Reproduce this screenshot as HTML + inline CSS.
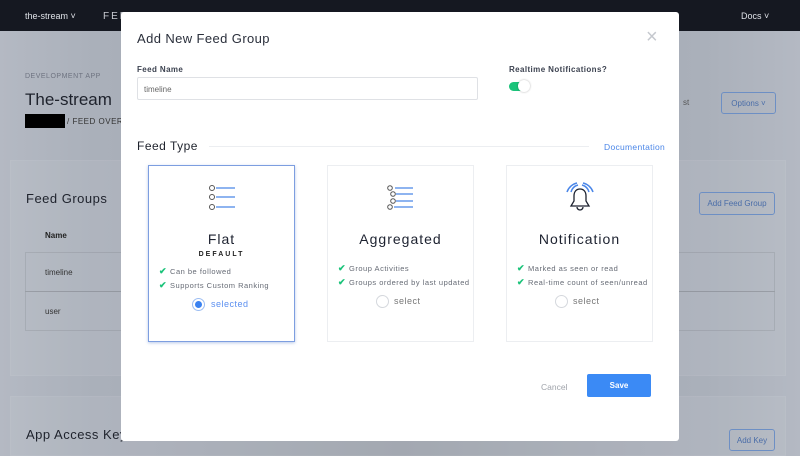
<!DOCTYPE html>
<html><head><style>
*{margin:0;padding:0;box-sizing:border-box}
body{width:800px;height:450px;overflow:hidden;position:relative;font-family:"Liberation Sans",sans-serif;background:linear-gradient(90deg,#b4b9c3 0%,#aab0ba 12%,#9ea3ad 50%,#aab0ba 88%,#b4b9c3 100%)}
.abs{position:absolute}
.nav{left:0;top:0;width:800px;height:31px;background:#151821;color:#c9ccd3;font-size:10px}
.card{background:rgba(255,255,255,0.06);border:1px solid rgba(255,255,255,0.05)}
.bbtn{border:1px solid #6d8fc4;border-radius:3px;color:#4a6da8;font-size:8px;text-align:center}
.modal{left:121px;top:12px;width:558px;height:429px;background:#fff;border-radius:3px}
.ft{position:absolute;top:153px;width:147px;height:177px;border:1px solid #eceef1;background:#fff;text-align:center}
.ft h3{position:absolute;top:65px;width:100%;font-weight:normal;font-size:14px;letter-spacing:1px;color:#1d2230}
.li{position:absolute;left:10px;font-size:7.5px;color:#666b75;letter-spacing:.5px;white-space:nowrap;text-align:left}
.li b{color:#1bc37a;font-size:9px;margin-right:3px}
.radio{position:absolute;width:13px;height:13px;border-radius:50%;border:1px solid #d5d8dd}
.rl{position:absolute;font-size:9px;color:#777;letter-spacing:.5px}
</style></head><body>
<div class="abs nav">
<div class="abs" style="left:25px;top:11px;color:#dfe2e8;font-size:9px">the-stream ˅</div>
<div class="abs" style="left:103px;top:11px;letter-spacing:2px">FEED</div>
<div class="abs" style="left:741px;top:11px;color:#dfe2e8;font-size:9px">Docs ˅</div>
</div>
<div class="abs" style="left:25px;top:73px;font-size:7px;color:#6e7380;letter-spacing:.5px">DEVELOPMENT APP</div>
<div class="abs" style="left:25px;top:90px;font-size:17px;color:#1e222c">The-stream</div>
<div class="abs" style="left:25px;top:114px;width:40px;height:14px;background:#000"></div>
<div class="abs" style="left:67px;top:117px;font-size:8px;color:#333;letter-spacing:.5px">/ FEED OVERV</div>
<div class="abs" style="left:683px;top:98px;font-size:8px;color:#555">st</div>
<div class="abs bbtn" style="left:721px;top:92px;width:55px;height:22px;line-height:21px">Options ˅</div>
<div class="abs card" style="left:10px;top:160px;width:776px;height:216px"></div>
<div class="abs" style="left:26px;top:191px;font-size:13px;color:#1e222c;letter-spacing:.5px">Feed Groups</div>
<div class="abs" style="left:45px;top:231px;font-size:8px;font-weight:bold;color:#222">Name</div>
<div class="abs" style="left:25px;top:252px;width:750px;height:40px;border:1px solid rgba(0,0,0,0.08)"></div>
<div class="abs" style="left:25px;top:291px;width:750px;height:40px;border:1px solid rgba(0,0,0,0.08)"></div>
<div class="abs" style="left:45px;top:268px;font-size:8px;color:#333">timeline</div>
<div class="abs" style="left:45px;top:307px;font-size:8px;color:#333">user</div>
<div class="abs bbtn" style="left:699px;top:192px;width:76px;height:23px;line-height:22px">Add Feed Group</div>
<div class="abs card" style="left:10px;top:396px;width:776px;height:60px"></div>
<div class="abs" style="left:26px;top:427px;font-size:13px;color:#1e222c;letter-spacing:.5px">App Access Key</div>
<div class="abs bbtn" style="left:729px;top:429px;width:46px;height:22px;line-height:21px">Add Key</div>

<div class="abs modal">
<div class="abs" style="left:16px;top:19px;font-size:13px;color:#2a2f3b;letter-spacing:.4px">Add New Feed Group</div>
<div class="abs" style="left:525px;top:14px;font-size:20px;color:#c5c8ce;font-weight:200">×</div>
<div class="abs" style="left:16px;top:53px;font-size:8px;font-weight:bold;color:#3c4250;letter-spacing:.4px">Feed Name</div>
<div class="abs" style="left:16px;top:65px;width:341px;height:23px;border:1px solid #dfe1e5;border-radius:2px;font-size:8px;color:#666;padding:7px 6px">timeline</div>
<div class="abs" style="left:388px;top:53px;font-size:8px;font-weight:bold;color:#3c4250;letter-spacing:.4px">Realtime Notifications?</div>
<div class="abs" style="left:388px;top:70px;width:18px;height:9px;border-radius:5px;background:#1bc37a"></div>
<div class="abs" style="left:397px;top:68px;width:12px;height:12px;border-radius:50%;background:#fff;box-shadow:0 0 2px rgba(0,0,0,.3)"></div>
<div class="abs" style="left:16px;top:127px;font-size:12px;color:#1e222c;letter-spacing:.5px">Feed Type</div>
<div class="abs" style="left:88px;top:134px;width:380px;height:1px;background:#eceef1"></div>
<div class="abs" style="left:483px;top:130px;font-size:8.5px;color:#4a86e8;letter-spacing:.3px">Documentation</div>

<div class="ft" style="left:27px;border:1px solid #7d9ee0;box-shadow:0 1px 3px rgba(80,120,200,.4)">
<svg class="abs" style="left:59px;top:18px" width="30" height="28"><g fill="none" stroke="#555" stroke-width="1"><circle cx="4" cy="4" r="2.5"/><circle cx="4" cy="13" r="2.5"/><circle cx="4" cy="23" r="2.5"/></g><g stroke="#4a86e8" stroke-width="1.3"><line x1="8" y1="4" x2="27" y2="4"/><line x1="8" y1="13" x2="27" y2="13"/><line x1="8" y1="23" x2="27" y2="23"/></g></svg>
<h3>Flat</h3>
<div class="abs" style="top:85px;width:100%;font-size:7px;font-weight:bold;letter-spacing:2px;color:#222">DEFAULT</div>
<div class="li" style="top:100px"><b>✔</b>Can be followed</div>
<div class="li" style="top:114px"><b>✔</b>Supports Custom Ranking</div>
<div class="radio" style="left:43px;top:132px;border-color:#9cbdf2"><div style="margin:2px;width:7px;height:7px;border-radius:50%;background:#3b82f0"></div></div>
<div class="rl" style="left:62px;top:133px;color:#5b8ff0">selected</div>
</div>

<div class="ft" style="left:206px">
<svg class="abs" style="left:58px;top:18px" width="32" height="28"><g fill="none" stroke="#555" stroke-width="1"><circle cx="4" cy="4" r="2.3"/><circle cx="7" cy="10" r="2.3"/><circle cx="7" cy="17" r="2.3"/><circle cx="4" cy="23" r="2.3"/></g><g stroke="#4a86e8" stroke-width="1.3"><line x1="9" y1="4" x2="27" y2="4"/><line x1="10" y1="10" x2="27" y2="10"/><line x1="10" y1="17" x2="27" y2="17"/><line x1="8" y1="23" x2="27" y2="23"/></g></svg>
<h3>Aggregated</h3>
<div class="li" style="top:97px"><b>✔</b>Group Activities</div>
<div class="li" style="top:111px"><b>✔</b>Groups ordered by last updated</div>
<div class="radio" style="left:48px;top:129px"></div>
<div class="rl" style="left:66px;top:130px">select</div>
</div>

<div class="ft" style="left:385px">
<svg class="abs" style="left:58px;top:16px" width="30" height="30"><g fill="none" stroke="#4a86e8" stroke-width="1.5"><path d="M6 10a10 10 0 0 1 7-7"/><path d="M2 10a14 14 0 0 1 10-9"/><path d="M24 10a10 10 0 0 0-7-7"/><path d="M28 10a14 14 0 0 0-10-9"/></g><g fill="none" stroke="#1d2230" stroke-width="1.3"><path d="M15 7c-4 0-6 3-6 7v5l-3 5h18l-3-5v-5c0-4-2-7-6-7z"/><path d="M12 25a3 3 0 0 0 6 0"/></g></svg>
<h3>Notification</h3>
<div class="li" style="top:97px"><b>✔</b>Marked as seen or read</div>
<div class="li" style="top:111px"><b>✔</b>Real-time count of seen/unread</div>
<div class="radio" style="left:48px;top:129px"></div>
<div class="rl" style="left:66px;top:130px">select</div>
</div>

<div class="abs" style="left:420px;top:370px;font-size:8.5px;color:#a0a4ab">Cancel</div>
<div class="abs" style="left:466px;top:362px;width:64px;height:23px;background:#3b8af5;border-radius:2px;color:#fff;font-size:8px;font-weight:bold;text-align:center;line-height:23px">Save</div>
</div>
</body></html>
